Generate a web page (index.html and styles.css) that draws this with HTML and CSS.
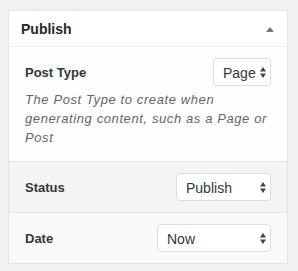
FILE: index.html
```html
<!DOCTYPE html>
<html lang="en">
  <head>
    <meta charset="UTF-8" />
    <meta name="viewport" content="width=device-width, initial-scale=1.0" />
    <title>Publish</title>
    <link rel="stylesheet" href="styles.css">
  </head>
  <body>
    <div class="postbox">
      <!-- Header -->
      <div class="postbox-header">
        <h2>Publish</h2>
        <svg class="toggle" width="8" height="5" viewBox="0 0 8 5">
          <polygon points="0,5 4,0 8,5" fill="#72777c" />
        </svg>
      </div>
      <!-- Post Type -->
      <div class="field field-white">
        <div class="field-row">
          <label>Post Type</label>
          <div class="select select-page">
            <span>Page</span>
            <svg class="arrows" width="6" height="11" viewBox="0 0 6 11">
              <polygon points="0,4.5 3,0 6,4.5" fill="#444" />
              <polygon points="0,6.5 3,11 6,6.5" fill="#444" />
            </svg>
          </div>
        </div>
        <p class="description">
          The Post Type to create when generating content, such as a Page or
          Post
        </p>
      </div>
      <!-- Status -->
      <div class="field field-grey">
        <div class="field-row">
          <label>Status</label>
          <div class="select select-status">
            <span>Publish</span>
            <svg class="arrows" width="6" height="11" viewBox="0 0 6 11">
              <polygon points="0,4.5 3,0 6,4.5" fill="#444" />
              <polygon points="0,6.5 3,11 6,6.5" fill="#444" />
            </svg>
          </div>
        </div>
      </div>
      <!-- Date -->
      <div class="field field-light">
        <div class="field-row">
          <label>Date</label>
          <div class="select select-date">
            <span>Now</span>
            <svg class="arrows" width="6" height="11" viewBox="0 0 6 11">
              <polygon points="0,4.5 3,0 6,4.5" fill="#444" />
              <polygon points="0,6.5 3,11 6,6.5" fill="#444" />
            </svg>
          </div>
        </div>
      </div>
    </div>
  </body>
</html>
```

FILE: styles.css
```css
* {
  margin: 0;
  padding: 0;
  box-sizing: border-box;
}
body {
  font-family: "Liberation Sans", Arial, sans-serif;
  background-color: #f1f1f1;
  color: #23282d;
  padding: 10px 0 0 8px;
}
/* Box */
.postbox {
  width: 280px;
  background: #fff;
  border: 1px solid #e5e5e5;
  box-shadow: 0 1px 1px rgba(0, 0, 0, 0.04);
}
.postbox-header {
  height: 36px;
  border-bottom: 1px solid #eee;
  display: flex;
  align-items: center;
  justify-content: space-between;
  padding: 0 13px 0 12px;
}
.postbox-header h2 {
  font-size: 14px;
  font-weight: bold;
  color: #23282d;
}
.toggle {
  display: block;
  margin-top: 1px;
}
/* Fields */
.field {
  padding: 11px 16px;
  border-bottom: 1px solid #e5e5e5;
}
.field:last-child {
  border-bottom: none;
}
.field-white {
  background: #fdfdfd;
  padding-bottom: 14px;
}
.field-grey {
  background: #f4f4f4;
}
.field-light {
  background: #fafafa;
}
.field-row {
  display: flex;
  align-items: center;
  justify-content: space-between;
}
.field-row label {
  font-size: 13px;
  font-weight: bold;
  color: #32373c;
}
.description {
  margin-top: 4px;
  font-size: 13px;
  line-height: 19px;
  font-style: italic;
  letter-spacing: 0.6px;
  color: #666;
}
/* Selects */
.select {
  height: 28px;
  display: flex;
  align-items: center;
  justify-content: space-between;
  padding: 0 4px 0 9px;
  background: #fff;
  border: 1px solid #ddd;
  border-radius: 4px;
  font-size: 14px;
  color: #32373c;
}
.select span {
  padding-top: 1px;
}
.arrows {
  display: block;
}
.select-page {
  width: 58px;
}
.select-status {
  width: 95px;
}
.select-date {
  width: 114px;
}
```
